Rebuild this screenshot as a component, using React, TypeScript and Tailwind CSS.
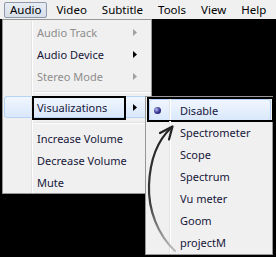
import React from "react";

const textCls = "text-[11px] leading-none text-[#17173a] whitespace-nowrap";

function Arrow({ disabled }: { disabled?: boolean }) {
  return (
    <svg width="4" height="7" viewBox="0 0 4 7" className="ml-auto mr-[14px] shrink-0">
      <path d="M0 0 L4 3.5 L0 7 Z" fill={disabled ? "#a0a0a0" : "#000"} />
    </svg>
  );
}

function Row({
  label,
  disabled,
  sub,
  highlight,
  boxed,
}: {
  label: string;
  disabled?: boolean;
  sub?: boolean;
  highlight?: boolean;
  boxed?: boolean;
}) {
  return (
    <div className="relative flex h-[22px] items-stretch">
      {highlight && (
        <div className="absolute inset-y-0 left-[1px] right-[1px] rounded-[3px] border border-[#b5d3f6] bg-gradient-to-b from-[#f0f6fe] to-[#dae8fb]" />
      )}
      <div className="relative w-[29px] shrink-0 border-r border-[#e2e3e3]" />
      <div className="relative w-px shrink-0 bg-white" />
      <div className="relative flex flex-1 items-center pl-[4px]">
        <span className={disabled ? "text-[11px] leading-none text-[#8d8d8d] whitespace-nowrap" : textCls}>
          {label}
        </span>
        {sub && <Arrow disabled={disabled} />}
      </div>
      {boxed && (
        <div className="absolute left-[29px] top-0 h-[24px] w-[94px] border-2 border-black" />
      )}
    </div>
  );
}

function Sep() {
  return (
    <div className="flex h-[9px] items-stretch">
      <div className="w-[29px] shrink-0 border-r border-[#e2e3e3]" />
      <div className="w-px shrink-0 bg-white" />
      <div className="flex flex-1 flex-col justify-center pl-[1px]">
        <div className="h-px bg-[#e0e0e0]" />
        <div className="h-px bg-white" />
      </div>
    </div>
  );
}

function SubRow({ label, checked }: { label: string; checked?: boolean }) {
  return (
    <div className="relative flex h-[22px] items-stretch">
      {checked && (
        <div className="absolute inset-y-0 left-[3px] right-[1px] rounded-[3px] border border-[#b5d3f6] bg-gradient-to-b from-[#f0f6fe] to-[#dae8fb]" />
      )}
      <div className="relative flex w-[24px] shrink-0 items-center justify-center border-r border-[#e2e3e3]">
        {checked && (
          <div className="h-[7px] w-[7px] rounded-full bg-[radial-gradient(circle_at_35%_35%,#b4b4ee,#33338f_55%,#15155a)]" />
        )}
      </div>
      <div className="relative w-px shrink-0 bg-white" />
      <div className="relative flex flex-1 items-center pl-[9px]">
        <span className={textCls}>{label}</span>
      </div>
      {checked && (
        <div className="absolute left-[1px] top-[-2px] h-[25px] w-[127px] border-2 border-black" />
      )}
    </div>
  );
}

export default function App() {
  const bar = ["Video", "Subtitle", "Tools", "View", "Help"];
  return (
    <div className="relative h-[257px] w-[276px] overflow-hidden bg-black font-['Noto_Sans',sans-serif]">
      <div className="flex h-[19px] items-center bg-[#f0f0f0] pl-[4px] gap-[3px]">
        <div className="flex h-[16px] items-center rounded-[2px] border border-[#8e9aab] bg-gradient-to-b from-[#e8edf3] to-[#d6dee8] px-[5px]">
          <span className="text-[11.5px] leading-none text-black">Audio</span>
        </div>
        {bar.map((b) => (
          <div key={b} className="flex h-[16px] items-center px-[6px]">
            <span className="text-[11.5px] leading-none text-black">{b}</span>
          </div>
        ))}
      </div>

      <div className="absolute left-[2px] top-[19px] w-[150px] border border-[#979797] bg-[#f0f0f0] pt-[1px]">
        <Row label="Audio Track" disabled sub />
        <Row label="Audio Device" sub />
        <Row label="Stereo Mode" disabled sub />
        <Sep />
        <Row label="Visualizations" sub highlight boxed />
        <Sep />
        <Row label="Increase Volume" />
        <Row label="Decrease Volume" />
        <Row label="Mute" />
      </div>

      <div className="absolute left-[145px] top-[96px] w-[128px] border border-[#979797] bg-[#f0f0f0] pt-[2px] pb-[1px]">
        <SubRow label="Disable" checked />
        <SubRow label="Spectrometer" />
        <SubRow label="Scope" />
        <SubRow label="Spectrum" />
        <SubRow label="Vu meter" />
        <SubRow label="Goom" />
        <SubRow label="projectM" />
      </div>

      <svg className="pointer-events-none absolute inset-0" width="276" height="257" viewBox="0 0 276 257">
        <defs>
          <linearGradient id="ag" gradientUnits="userSpaceOnUse" x1="0" y1="125" x2="0" y2="254">
            <stop offset="0" stopColor="#222" />
            <stop offset="0.6" stopColor="#3a3a3a" />
            <stop offset="1" stopColor="#c8c8c8" />
          </linearGradient>
        </defs>
        <path
          d="M 175 251 C 158 235, 148 210, 149 185 C 150 160, 158 140, 171 128"
          fill="none"
          stroke="url(#ag)"
          strokeWidth="2.2"
          strokeLinecap="round"
        />
        <path d="M 160 133 L 172.5 126.5 L 169 139.5" fill="none" stroke="#222" strokeWidth="2.2" strokeLinecap="round" strokeLinejoin="round" />
      </svg>
    </div>
  );
}
